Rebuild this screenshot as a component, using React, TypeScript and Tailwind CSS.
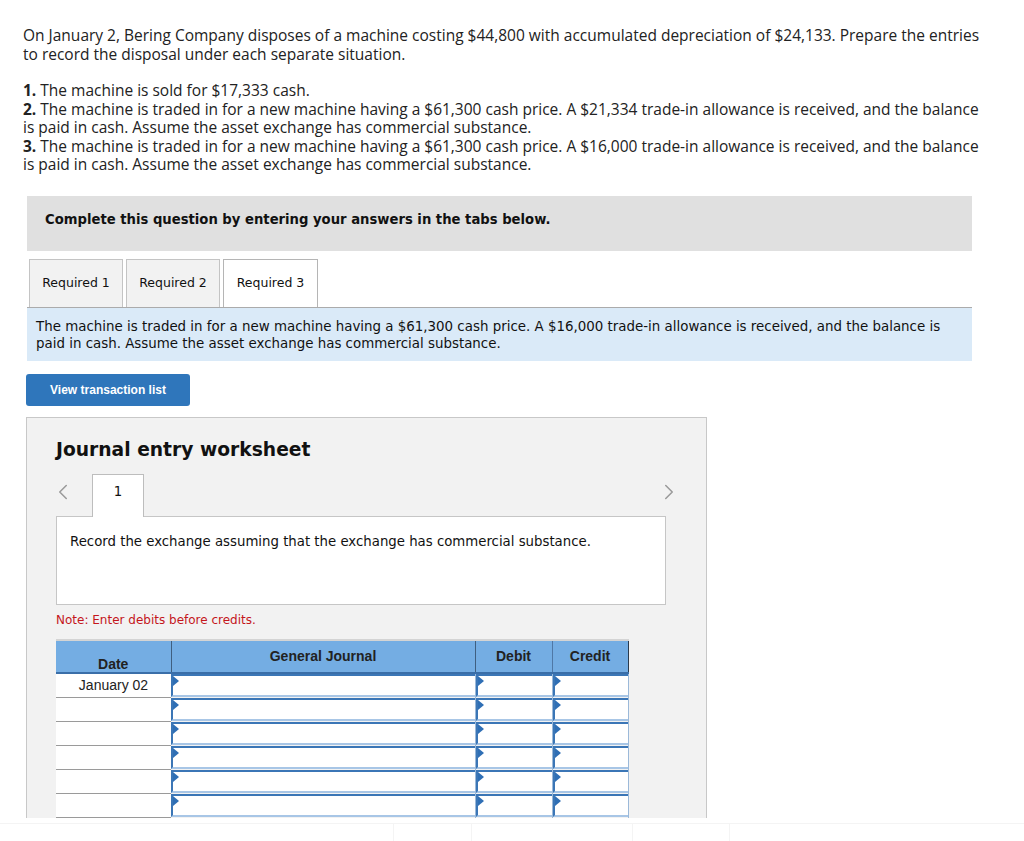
import { ChevronLeft, ChevronRight } from "lucide-react";

const rows = ["January 02", "", "", "", "", "", ""];

function InputCell() {
  return (
    <td className="p-0 h-[24px] border-r border-[#9bb9d9]">
      <div className="relative h-[23px] bg-white border-t-2 border-l-2 border-[#3b76b6] border-b-2 border-b-[#a8c6e6]">
        <span className="absolute left-0 top-0 w-0 h-0 border-t-[5px] border-b-[5px] border-l-[6px] border-t-transparent border-b-transparent border-l-[#2f6fb5]" />
      </div>
    </td>
  );
}

export default function App() {
  return (
    <div className="bg-white w-[1024px] min-h-[841px]">
      <div className="h-[818px] overflow-hidden">
        {/* Question text */}
        <div className="pl-[23px] pr-[38px] pt-[26px] text-[15.5px] leading-[18.5px] text-[#222] font-['Open_Sans',sans-serif]">
          <p>
            On January 2, Bering Company disposes of a machine costing $44,800 with accumulated depreciation of $24,133. Prepare the entries to record the disposal under each separate situation.
          </p>
          <div className="mt-[18px]">
            <p><b>1.</b> The machine is sold for $17,333 cash.</p>
            <p>
              <b>2.</b> The machine is traded in for a new machine having a $61,300 cash price. A $21,334 trade-in allowance is received, and the balance is paid in cash. Assume the asset exchange has commercial substance.
            </p>
            <p>
              <b>3.</b> The machine is traded in for a new machine having a $61,300 cash price. A $16,000 trade-in allowance is received, and the balance is paid in cash. Assume the asset exchange has commercial substance.
            </p>
          </div>
        </div>

        <div className="ml-[27px] w-[945px] mt-[22px] font-['DejaVu_Sans',Verdana,sans-serif] text-[#111]">
          <div className="h-[55px] bg-[#e0e0e0] pl-[18px] pt-[14px] text-[13.2px] font-bold">
            Complete this question by entering your answers in the tabs below.
          </div>

          {/* Tabs */}
          <div className="mt-[8px] flex gap-[3px] pl-[2px] border-b border-[#ababab] text-[12.5px]">
            <div className="w-[94px] h-[48px] flex items-center justify-center bg-[#f2f2f2] border border-b-0 border-[#c4c4c4]">Required 1</div>
            <div className="w-[94px] h-[48px] flex items-center justify-center bg-[#f2f2f2] border border-b-0 border-[#c4c4c4]">Required 2</div>
            <div className="w-[95px] h-[48px] flex items-center justify-center bg-white border border-b-0 border-[#b5b5b5] -mb-px">Required 3</div>
          </div>

          <div className="h-[53px] bg-[#daeaf8] pl-[9px] pt-[10px] text-[13.4px] leading-[17px] pr-[10px]">
            The machine is traded in for a new machine having a $61,300 cash price. A $16,000 trade-in allowance is received, and the balance is paid in cash. Assume the asset exchange has commercial substance.
          </div>
        </div>

        <button className="ml-[26px] mt-[13px] w-[164px] h-[32px] rounded-[3px] bg-[#2f76bb] text-white text-[12px] font-bold font-['Liberation_Sans',Arial,sans-serif]">
          View transaction list
        </button>

        {/* Worksheet */}
        <div className="ml-[26px] mt-[11px] w-[681px] h-[500px] bg-[#f2f2f2] border border-[#c8c8c8] pl-[29px] pt-[20px] font-['DejaVu_Sans',Verdana,sans-serif] text-[#111]">
          <h2 className="text-[18.7px] font-bold leading-[24px]">Journal entry worksheet</h2>

          <div className="mt-[12px] w-[610px] flex items-end relative">
            <ChevronLeft className="absolute left-[-6px] top-[5px] text-[#9a9a9a]" size={26} strokeWidth={1.4} />
            <div className="ml-[36px] w-[52px] h-[43px] -mb-px bg-white border border-b-0 border-[#bdbdbd] flex justify-center pt-[7px] text-[13.3px] z-10">
              1
            </div>
            <ChevronRight className="absolute right-[-16px] top-[5px] text-[#9a9a9a]" size={26} strokeWidth={1.4} />
          </div>
          <div className="w-[610px] h-[89px] bg-white border border-[#c6c6c6] pl-[13px] pt-[15px] text-[13.3px]">
            Record the exchange assuming that the exchange has commercial substance.
          </div>

          <p className="mt-[6px] text-[12px] text-[#c4161c]">Note: Enter debits before credits.</p>

          <table className="mt-[10px] border-collapse border-t-2 border-[#d4d4d4] font-['Liberation_Sans',Arial,sans-serif] text-[14px] text-[#222]">
            <thead>
              <tr className="bg-[#74ade3] h-[32px] border-b-2 border-[#3a6ea8]">
                <th className="w-[115px] align-top pt-[15px] leading-[16px] border-r border-[#3f5f80] font-bold">Date</th>
                <th className="w-[304px] align-top pt-[7px] leading-[16px] border-r border-[#3f5f80] font-bold">General Journal</th>
                <th className="w-[77px] align-top pt-[7px] leading-[16px] border-r border-[#4f78a6] font-bold">Debit</th>
                <th className="w-[76px] align-top pt-[7px] leading-[16px] border-r border-[#2b3b4d] font-bold">Credit</th>
              </tr>
            </thead>
            <tbody>
              {rows.map((d, i) => (
                <tr key={i} className="h-[24px]">
                  <td className="p-0 bg-white border-b border-[#9a9a9a] text-center align-top leading-[23px]">{d}</td>
                  <InputCell />
                  <InputCell />
                  <InputCell />
                </tr>
              ))}
            </tbody>
          </table>
        </div>
      </div>

      {/* Faint footer strip */}
      <div className="h-[23px] border-t border-[#f4f4f4] flex mt-[5px]">
        <div className="ml-[393px] w-[79px] border-l border-r border-[#f4f4f4]" />
        <div className="ml-[160px] w-[98px] border-l border-r border-[#f4f4f4]" />
      </div>
    </div>
  );
}
